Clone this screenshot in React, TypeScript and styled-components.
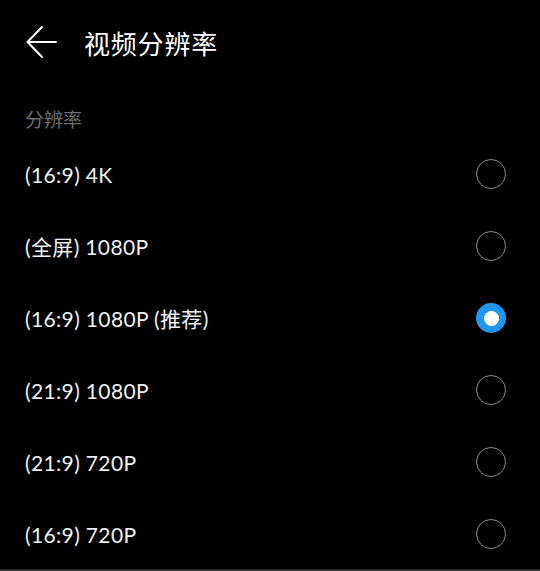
import styled, { createGlobalStyle } from "styled-components";

const GlobalStyle = createGlobalStyle`
  html, body {
    margin: 0;
    padding: 0;
    background: #000;
  }
  body {
    font-family: Lato, "Noto Sans CJK SC", sans-serif;
    color: #fff;
  }
`;

type TOption = {
  label: string;
  selected?: boolean;
};

const options: TOption[] = [
  { label: "(16:9) 4K" },
  { label: "(全屏) 1080P" },
  { label: "(16:9) 1080P (推荐)", selected: true },
  { label: "(21:9) 1080P" },
  { label: "(21:9) 720P" },
  { label: "(16:9) 720P" },
];

const BackIcon = () => (
  <svg width="34" height="34" viewBox="0 0 34 34" fill="none">
    <path
      d="M31 17H3M17 2L2.5 17L17 32"
      stroke="#fff"
      strokeWidth="2"
      strokeLinecap="round"
      strokeLinejoin="round"
    />
  </svg>
);

export default function App() {
  return (
    <>
      <GlobalStyle />
      <Page>
        <Header>
          <BackButton>
            <BackIcon />
          </BackButton>
          <Title>视频分辨率</Title>
        </Header>

        <List>
          <SectionLabel>分辨率</SectionLabel>
          {options.map((opt) => (
            <Row key={opt.label}>
              <RowText>{opt.label}</RowText>
              <Radio $selected={opt.selected}>
                {opt.selected && <RadioDot />}
              </Radio>
            </Row>
          ))}
        </List>

        <BottomEdge />
      </Page>
    </>
  );
}

const Page = styled.div`
  display: flex;
  flex-direction: column;
  height: 571px;
  background: #000;
  overflow: hidden;
`;
const Header = styled.div`
  display: flex;
  align-items: center;
  height: 84px;
  flex-shrink: 0;
  padding-left: 25px;
`;
const BackButton = styled.div`
  display: flex;
  align-items: center;
  justify-content: center;
  width: 34px;
  height: 34px;
  margin-right: 25px;
`;
const Title = styled.div`
  font-family: "Noto Sans CJK SC", sans-serif;
  font-size: 26px;
  font-weight: 400;
  color: #fff;
  letter-spacing: 0.8px;
`;
const List = styled.div`
  flex: 1;
  display: flex;
  flex-direction: column;
  overflow: hidden;
`;
const SectionLabel = styled.div`
  flex-shrink: 0;
  height: 54px;
  box-sizing: border-box;
  padding: 21px 25px 0;
  line-height: 28px;
  font-family: "Noto Sans CJK SC", sans-serif;
  font-size: 19px;
  color: #6e6e6e;
`;
const Row = styled.div`
  flex-shrink: 0;
  display: flex;
  align-items: center;
  justify-content: space-between;
  height: 72px;
  padding: 0 34px 0 25px;
`;
const RowText = styled.div`
  font-size: 21px;
  letter-spacing: 0.35px;
  color: #f0f0f0;
`;
const Radio = styled.div<{ $selected?: boolean }>`
  display: flex;
  align-items: center;
  justify-content: center;
  width: 30px;
  height: 30px;
  box-sizing: border-box;
  border-radius: 50%;
  border: ${({ $selected }) => ($selected ? "none" : "1.5px solid #8c8c8c")};
  background: ${({ $selected }) => ($selected ? "#2196f3" : "transparent")};
`;
const RadioDot = styled.div`
  width: 15px;
  height: 15px;
  border-radius: 50%;
  background: #fff;
`;
const BottomEdge = styled.div`
  height: 2px;
  flex-shrink: 0;
  background: #2e2e2e;
`;
